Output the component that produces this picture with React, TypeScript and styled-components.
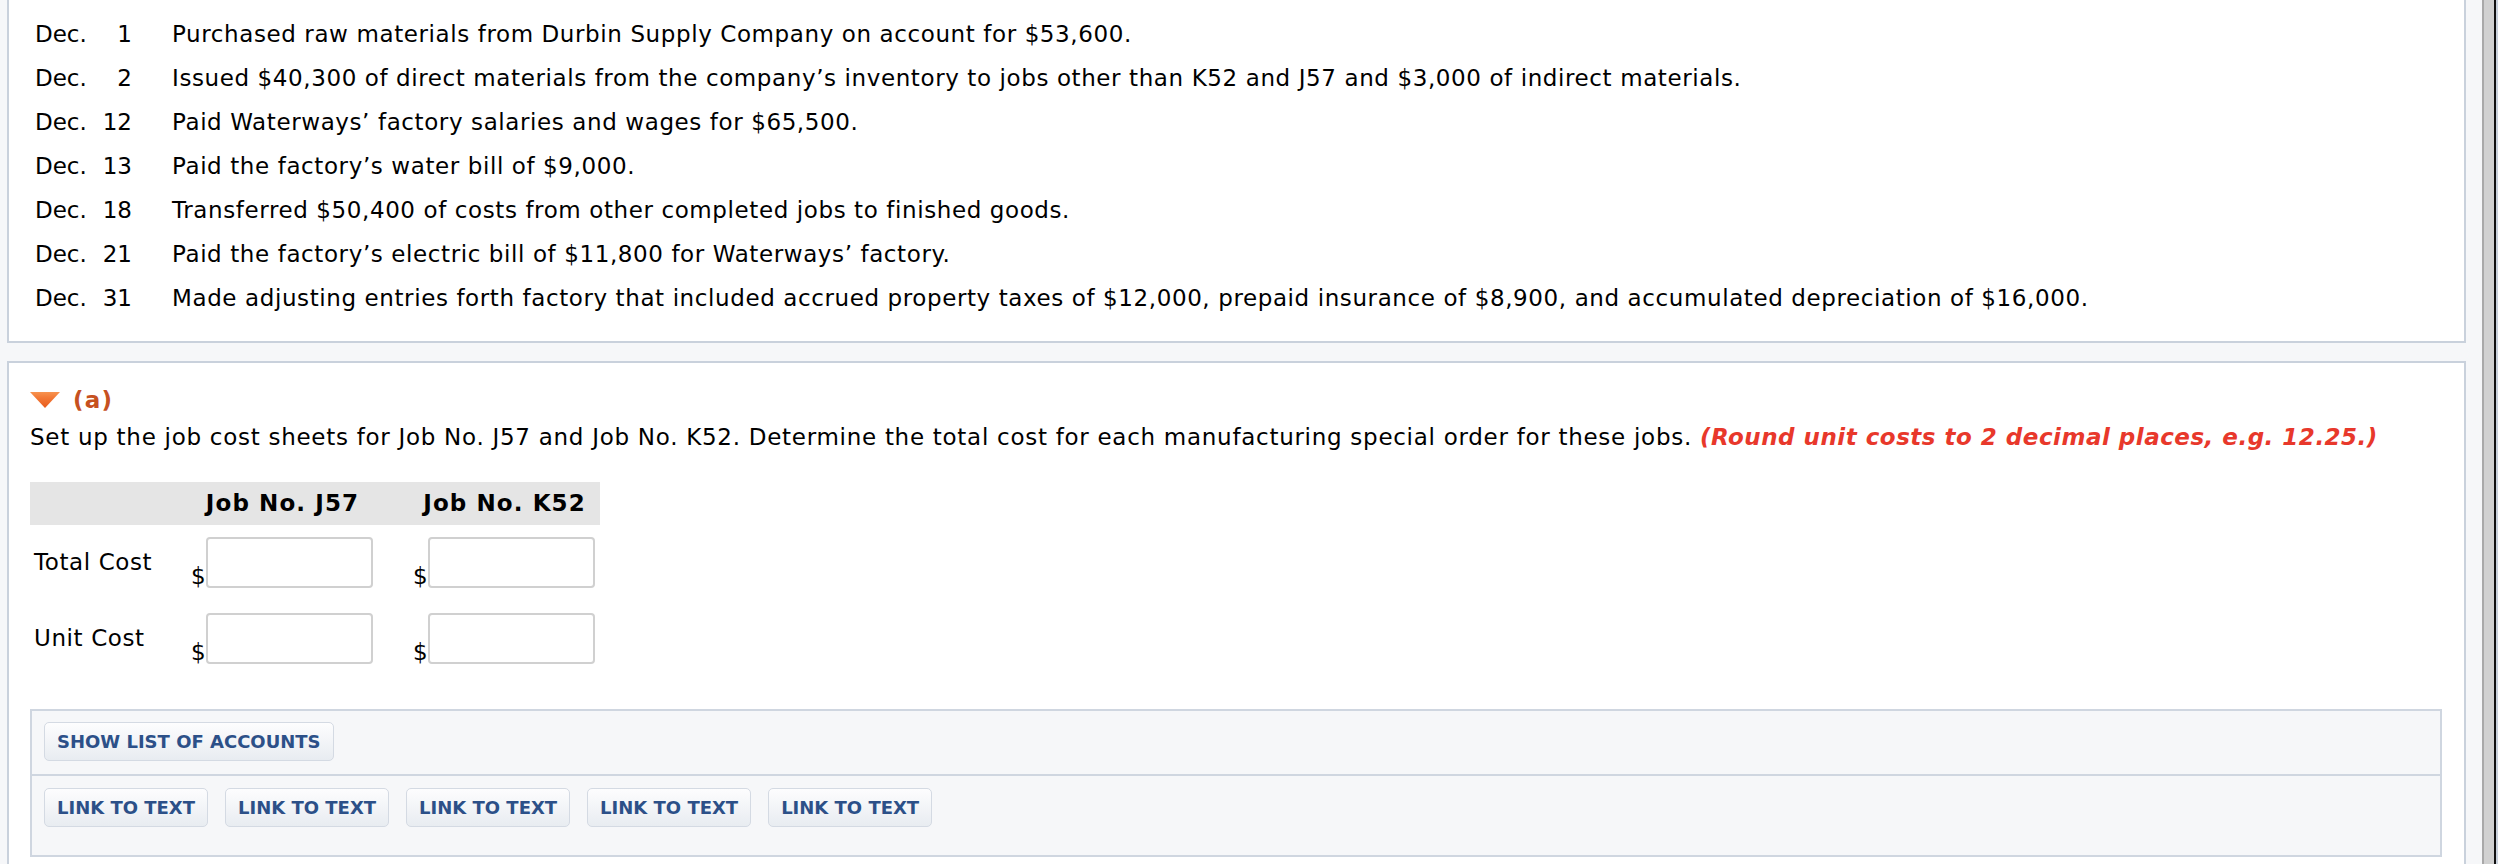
import * as React from 'react';
import styled, { createGlobalStyle } from 'styled-components';

const GlobalStyle = createGlobalStyle`
    html, body {
        margin: 0;
        padding: 0;
        overflow: hidden;
        background: #f6f7f9;
    }
    body {
        font-family: Verdana, 'DejaVu Sans', sans-serif;
        color: #000;
    }
`;

const transactions = [
    { day: '1', text: 'Purchased raw materials from Durbin Supply Company on account for $53,600.' },
    { day: '2', text: 'Issued $40,300 of direct materials from the company\u2019s inventory to jobs other than K52 and J57 and $3,000 of indirect materials.' },
    { day: '12', text: 'Paid Waterways\u2019 factory salaries and wages for $65,500.' },
    { day: '13', text: 'Paid the factory\u2019s water bill of $9,000.' },
    { day: '18', text: 'Transferred $50,400 of costs from other completed jobs to finished goods.' },
    { day: '21', text: 'Paid the factory\u2019s electric bill of $11,800 for Waterways\u2019 factory.' },
    { day: '31', text: 'Made adjusting entries forth factory that included accrued property taxes of $12,000, prepaid insurance of $8,900, and accumulated depreciation of $16,000.' },
];

const costRows = ['Total Cost', 'Unit Cost'];
const jobs = ['Job No. J57', 'Job No. K52'];

export default () => {
    return (
        <Page>
            <GlobalStyle />
            <Main>
                <Panel>
                    {transactions.map((t) => (
                        <Transaction key={t.day}>
                            <Month>Dec.</Month>
                            <Day>{t.day}</Day>
                            <Description>{t.text}</Description>
                        </Transaction>
                    ))}
                </Panel>

                <QuestionPanel>
                    <PartHeader>
                        <svg width="30" height="16" viewBox="0 0 30 16">
                            <defs>
                                <linearGradient id="tri" x1="0" y1="0" x2="0" y2="1">
                                    <stop offset="0" stopColor="#f7934f" />
                                    <stop offset="0.35" stopColor="#f37a37" />
                                    <stop offset="1" stopColor="#e75a1c" />
                                </linearGradient>
                            </defs>
                            <polygon points="0,0 30,0 15,16" fill="url(#tri)" />
                        </svg>
                        <PartLabel>(a)</PartLabel>
                    </PartHeader>
                    <Instructions>
                        Set up the job cost sheets for Job No. J57 and Job No. K52. Determine the total cost for each
                        manufacturing special order for these jobs. <Hint>(Round unit costs to 2 decimal places, e.g. 12.25.)</Hint>
                    </Instructions>

                    <CostTable>
                        <HeaderRow>
                            <span />
                            {jobs.map((j) => (
                                <HeaderCell key={j}>{j}</HeaderCell>
                            ))}
                        </HeaderRow>
                        {costRows.map((r) => (
                            <CostRow key={r}>
                                <RowLabel>{r}</RowLabel>
                                {jobs.map((j) => (
                                    <AmountCell key={j}>
                                        <Dollar>$</Dollar>
                                        <AmountInput type="text" />
                                    </AmountCell>
                                ))}
                            </CostRow>
                        ))}
                    </CostTable>

                    <ToolBox>
                        <ToolSection>
                            <ToolButton>SHOW LIST OF ACCOUNTS</ToolButton>
                        </ToolSection>
                        <ToolSection $last>
                            {Array.from(Array(5)).map((_, i) => (
                                <ToolButton key={i}>LINK TO TEXT</ToolButton>
                            ))}
                        </ToolSection>
                    </ToolBox>
                </QuestionPanel>
            </Main>
            <Scrollbar />
        </Page>
    );
};

const Page = styled.div`
    display: flex;
    width: 2498px;
    height: 864px;
    overflow: hidden;
    background: #f6f7f9;
`;

const Main = styled.div`
    flex: 1;
    padding: 0 16px 0 7px;
`;

const Scrollbar = styled.div`
    width: 10px;
    border-left: 2px solid #a9a9a9;
    border-right: 2px solid #111;
    background: #d1d1d1;
    box-shadow: 2px 0 0 #c9d1dc;
    margin-right: 2px;
`;

const Panel = styled.div`
    background: #fff;
    border: 2px solid #c9d1dc;
    border-top: none;
    padding: 12px 20px 21px 26px;
`;

const Transaction = styled.div`
    display: grid;
    grid-template-columns: 55px 42px 1fr;
    height: 44px;
    font-size: 23px;
    line-height: 44px;
    white-space: nowrap;
`;

const Month = styled.span``;

const Day = styled.span`
    text-align: right;
`;

const Description = styled.span`
    padding-left: 40px;
    letter-spacing: 0.6px;
`;

const QuestionPanel = styled.div`
    margin-top: 18px;
    background: #fff;
    border: 2px solid #c9d1dc;
    border-bottom: none;
    padding: 22px 22px 40px 21px;
`;

const PartHeader = styled.div`
    display: flex;
    align-items: center;
    gap: 13px;
    height: 30px;
`;

const PartLabel = styled.span`
    font-size: 23px;
    font-weight: bold;
    line-height: 30px;
    letter-spacing: 1.2px;
    color: #c6511f;
`;

const Instructions = styled.div`
    margin-top: 7px;
    font-size: 23px;
    line-height: 30px;
    letter-spacing: 0.72px;
    white-space: nowrap;
`;

const Hint = styled.span`
    color: #e8382b;
    font-weight: bold;
    font-style: italic;
    letter-spacing: 0.5px;
`;

const CostTable = styled.div`
    margin-top: 30px;
    width: 570px;
`;

const rowGrid = `
    display: grid;
    grid-template-columns: 122px 183px 183px;
    column-gap: 39px;
    padding-right: 4px;
`;

const HeaderRow = styled.div`
    ${rowGrid}
    height: 43px;
    background: #e5e5e5;
`;

const HeaderCell = styled.div`
    text-align: center;
    font-size: 23px;
    font-weight: bold;
    line-height: 43px;
    letter-spacing: 1.1px;
    white-space: nowrap;
`;

const CostRow = styled.div`
    ${rowGrid}
    margin-top: 12px;
    & + & {
        margin-top: 25px;
    }
`;

const RowLabel = styled.div`
    padding: 10px 0 0 4px;
    font-size: 23px;
    line-height: 30px;
    letter-spacing: 0.6px;
    white-space: nowrap;
`;

const AmountCell = styled.div`
    display: flex;
    align-items: flex-end;
`;

const Dollar = styled.span`
    font-size: 23px;
    line-height: 23px;
`;

const AmountInput = styled.input`
    box-sizing: border-box;
    width: 167px;
    height: 51px;
    border: 2px solid #d0d0d0;
    border-radius: 4px;
    background: #fff;
    margin: 0;
    outline: none;
`;

const ToolBox = styled.div`
    margin-top: 45px;
    border: 2px solid #cfd6e0;
    background: #f6f7f9;
`;

const ToolSection = styled.div<{ $last?: boolean }>`
    display: flex;
    gap: 17px;
    padding: ${({ $last }) => ($last ? '12px 12px 28px' : '11px 12px 13px')};
    border-top: ${({ $last }) => ($last ? '2px solid #cfd6e0' : 'none')};
`;

const ToolButton = styled.button`
    box-sizing: border-box;
    height: 39px;
    padding: 0 12px;
    border: 1px solid #d4dae3;
    border-radius: 5px;
    background: linear-gradient(#fdfdfe, #e8ecf1);
    color: #2c5088;
    font-family: Verdana, 'DejaVu Sans', sans-serif;
    font-size: 18px;
    font-weight: bold;
    white-space: nowrap;
    cursor: pointer;
`;
